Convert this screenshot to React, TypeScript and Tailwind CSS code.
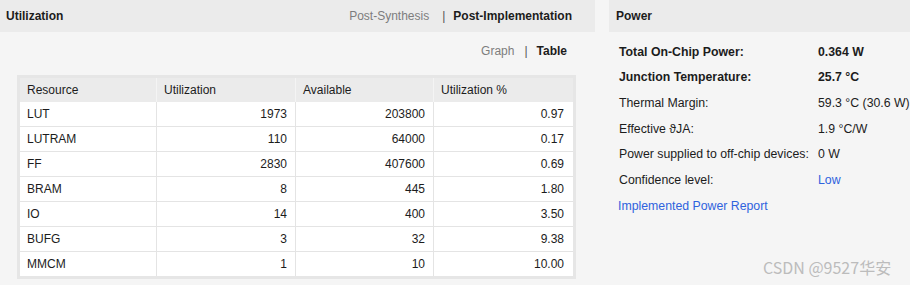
const FONT = "font-['Liberation_Sans',Arial,sans-serif]";

const rows = [
  ["LUT", "1973", "203800", "0.97"],
  ["LUTRAM", "110", "64000", "0.17"],
  ["FF", "2830", "407600", "0.69"],
  ["BRAM", "8", "445", "1.80"],
  ["IO", "14", "400", "3.50"],
  ["BUFG", "3", "32", "9.38"],
  ["MMCM", "1", "10", "10.00"],
];

const power: { label: string; value: string; bold?: boolean; link?: boolean }[] = [
  { label: "Total On-Chip Power:", value: "0.364 W", bold: true },
  { label: "Junction Temperature:", value: "25.7 °C", bold: true },
  { label: "Thermal Margin:", value: "59.3 °C (30.6 W)" },
  { label: "Effective ϑJA:", value: "1.9 °C/W" },
  { label: "Power supplied to off-chip devices:", value: "0 W" },
  { label: "Confidence level:", value: "Low", link: true },
];

const COLS = "grid grid-cols-[137px_139px_138px_138px]";

export default function App() {
  return (
    <div className={`relative w-[910px] h-[285px] bg-[#f5f5f5] flex gap-[14px] overflow-hidden text-[12px] text-[#1c1c1c] ${FONT}`}>
      {/* Utilization */}
      <div className="w-[595px] flex flex-col">
        <div className="h-[32px] bg-[#ebebeb] flex items-center justify-between pl-[6px] pr-[23px]">
          <span className="font-bold">Utilization</span>
          <div className="flex items-center">
            <span className="text-[#7d7d7d]">Post-Synthesis</span>
            <span className="ml-[13px] text-[#555]">|</span>
            <span className="ml-[8px] font-bold">Post-Implementation</span>
          </div>
        </div>

        <div className="h-[38px] flex items-center justify-end pr-[28px]">
          <span className="text-[#7d7d7d]">Graph</span>
          <span className="ml-[10px] text-[#555]">|</span>
          <span className="ml-[9px] font-bold">Table</span>
        </div>

        <div className="mt-[5px] ml-[17px] w-[559px] border-[3px] border-[#e6e6e6] bg-white">
          <div className={`${COLS} h-[24px] bg-[#ebebeb]`}>
            {["Resource", "Utilization", "Available", "Utilization %"].map((h, i) => (
              <div
                key={h}
                className={`flex items-center pl-[7px] ${i < 3 ? "border-r border-[#f4f4f4]" : ""}`}
              >
                {h}
              </div>
            ))}
          </div>
          {rows.map((r, ri) => (
            <div
              key={r[0]}
              className={`${COLS} ${ri < rows.length - 1 ? "h-[25px] border-b border-[#e4e4e4]" : "h-[24px]"}`}
            >
              {r.map((c, i) => (
                <div
                  key={i}
                  className={`flex items-center ${i === 0 ? "pl-[7px]" : "justify-end pr-[8px]"} ${i < 3 ? "border-r border-[#e4e4e4]" : ""}`}
                >
                  {c}
                </div>
              ))}
            </div>
          ))}
        </div>
      </div>

      {/* Power */}
      <div className="flex-1 flex flex-col">
        <div className="h-[32px] bg-[#ebebeb] flex items-center pl-[7px]">
          <span className="font-bold">Power</span>
        </div>
        <div className="pt-[7px] pl-[10px] flex flex-col text-[12.3px]">
          {power.map((p) => (
            <div key={p.label} className="h-[25.7px] grid grid-cols-[199px_1fr] items-center whitespace-nowrap">
              <span className={p.bold ? "font-bold" : ""}>{p.label}</span>
              <span className={p.bold ? "font-bold" : p.link ? "text-[#2f63de]" : ""}>{p.value}</span>
            </div>
          ))}
          <div className="h-[25.7px] flex items-center -ml-[1px] text-[#2f63de]">Implemented Power Report</div>
        </div>
      </div>

      <span className="absolute left-[763px] top-[256px] text-[16px] leading-[22px] text-[#bcbcbc] font-['Noto_Sans_CJK_SC',sans-serif] whitespace-nowrap">
        CSDN @9527华安
      </span>
    </div>
  );
}
